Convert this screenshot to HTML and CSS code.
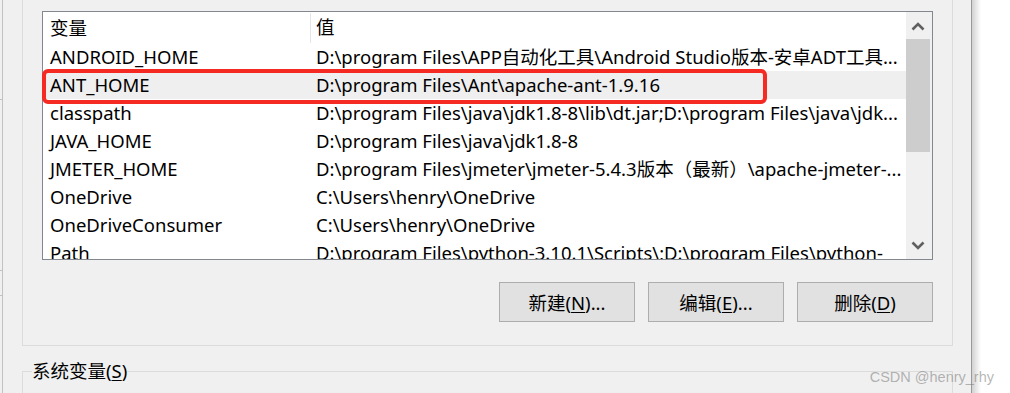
FILE: index.html
```html
<!DOCTYPE html>
<html lang="zh-CN">
<head>
<meta charset="utf-8">
<title>环境变量</title>
<link rel="stylesheet" href="styles.css">
</head>
<body>
<div class="edge"></div>
<div class="window">
  <div class="group">
    <div class="list">
      <div class="list-body">
        <div class="list-head">
          <div class="col-name head-name">变量</div>
          <div class="col-val head-val">值</div>
        </div>
        <div class="row"><div class="col-name">ANDROID_HOME</div><div class="col-val">D:\program Files\APP自动化工具\Android Studio版本-安卓ADT工具...</div></div>
        <div class="row sel"><div class="col-name">ANT_HOME</div><div class="col-val">D:\program Files\Ant\apache-ant-1.9.16</div></div>
        <div class="row"><div class="col-name">classpath</div><div class="col-val">D:\program Files\java\jdk1.8-8\lib\dt.jar;D:\program Files\java\jdk...</div></div>
        <div class="row"><div class="col-name">JAVA_HOME</div><div class="col-val">D:\program Files\java\jdk1.8-8</div></div>
        <div class="row"><div class="col-name">JMETER_HOME</div><div class="col-val">D:\program Files\jmeter\jmeter-5.4.3版本（最新）\apache-jmeter-...</div></div>
        <div class="row"><div class="col-name">OneDrive</div><div class="col-val">C:\Users\henry\OneDrive</div></div>
        <div class="row"><div class="col-name">OneDriveConsumer</div><div class="col-val">C:\Users\henry\OneDrive</div></div>
        <div class="row"><div class="col-name">Path</div><div class="col-val">D:\program Files\python-3.10.1\Scripts\;D:\program Files\python-</div></div>
      </div>
      <div class="scroll">
        <div class="sb-btn">
          <svg width="14" height="10" viewBox="0 0 14 10"><path d="M1.5 8.5 L7 3 L12.5 8.5" fill="none" stroke="#606060" stroke-width="2.6"/></svg>
        </div>
        <div class="thumb"></div>
        <div class="sb-track"></div>
        <div class="sb-btn sb-down">
          <svg width="14" height="10" viewBox="0 0 14 10"><path d="M1.5 1.5 L7 7 L12.5 1.5" fill="none" stroke="#606060" stroke-width="2.6"/></svg>
        </div>
      </div>
    </div>
    <div class="buttons">
      <button class="btn">新建(<u>N</u>)...</button>
      <button class="btn">编辑(<u>E</u>)...</button>
      <button class="btn">删除(<u>D</u>)</button>
    </div>
  </div>
  <div class="sysgroup">
    <div class="sysgroup-label">系统变量(<u>S</u>)</div>
  </div>
</div>
<div class="shade"></div>
<div class="highlight-box"></div>
<div class="watermark">CSDN @henry_rhy</div>
</body>
</html>
```
FILE: styles.css
```css
* { box-sizing: border-box; }
html, body { margin: 0; padding: 0; }
body {
  width: 1010px;
  height: 393px;
  overflow: hidden;
  background: #f0f0f0;
  font-family: "Noto Sans", "Noto Sans CJK SC", sans-serif;
  font-size: 18.5px;
  color: #000;
  display: flex;
  position: relative;
}
.edge {
  width: 3px;
  flex: none;
  border-right: 1px solid #c2c2c2;
  background:
    linear-gradient(#c2c2c2, #c2c2c2) 0 99px / 2px 1px no-repeat,
    linear-gradient(#c2c2c2, #c2c2c2) 0 270px / 2px 1px no-repeat,
    linear-gradient(#c2c2c2, #c2c2c2) 0 295px / 2px 1px no-repeat;
}
.window {
  width: 968px;
  flex: none;
  padding-left: 19px;
}
.shade {
  flex: 1;
  border-left: 1px solid #9a9a9a;
  background: linear-gradient(to right, #d2d2d2, #ffffff 9px);
}
.group {
  width: 931px;
  border: 1px solid #dcdcdc;
  border-top: 0;
  padding: 11px 19px 23px;
}
.list {
  height: 249px;
  border: 1px solid #828790;
  background: #fff;
  display: flex;
}
.list-body {
  flex: 1;
  min-width: 0;
  overflow: hidden;
}
.list-head {
  height: 31px;
  display: flex;
  align-items: stretch;
}
.head-name, .head-val {
  line-height: 30px;
}
.head-name {
  border-right: 1px solid #e5e5e5;
  margin-top: 1px;
}
.col-name {
  width: 268px;
  flex: none;
  padding-left: 7px;
  white-space: nowrap;
}
.col-val {
  flex: 1;
  min-width: 0;
  padding-left: 5px;
  padding-right: 0;
  white-space: nowrap;
  overflow: hidden;
  text-overflow: ellipsis;
}
.row {
  height: 28px;
  line-height: 27px;
  display: flex;
}
.row.sel { background: #efefef; }
.scroll {
  width: 26px;
  flex: none;
  background: #f0f0f0;
  display: flex;
  flex-direction: column;
  padding-right: 2px;
}
.sb-btn {
  height: 27px;
  display: flex;
  align-items: center;
  justify-content: center;
  flex: none;
}
.sb-down { height: 26px; }
.thumb {
  height: 113px;
  background: #cdcdcd;
  flex: none;
}
.sb-track { flex: 1; }
.buttons {
  margin-top: 22px;
  display: flex;
  justify-content: flex-end;
  gap: 13px;
}
.btn {
  width: 136px;
  height: 40px;
  padding: 0;
  border: 1px solid #adadad;
  background: #e1e1e1;
  font: inherit;
  color: #000;
  border-radius: 0;
}
u { text-underline-offset: 2px; }
.sysgroup {
  width: 931px;
  height: 22px;
  margin-top: 25px;
  border: 1px solid #dcdcdc;
  border-bottom: 0;
  padding-left: 9px;
}
.sysgroup-label {
  width: max-content;
  margin-top: -12px;
  line-height: 22px;
  background: #f0f0f0;
}
.highlight-box {
  position: absolute;
  left: 42px;
  top: 69px;
  width: 725px;
  height: 35px;
  border: 4px solid #f52a22;
  border-radius: 6px;
}
.watermark {
  position: absolute;
  right: 16px;
  top: 368px;
  font-family: "Liberation Sans", Arial, sans-serif;
  font-size: 14.5px;
  color: rgba(120, 120, 120, 0.55);
  line-height: 18px;
}
```
